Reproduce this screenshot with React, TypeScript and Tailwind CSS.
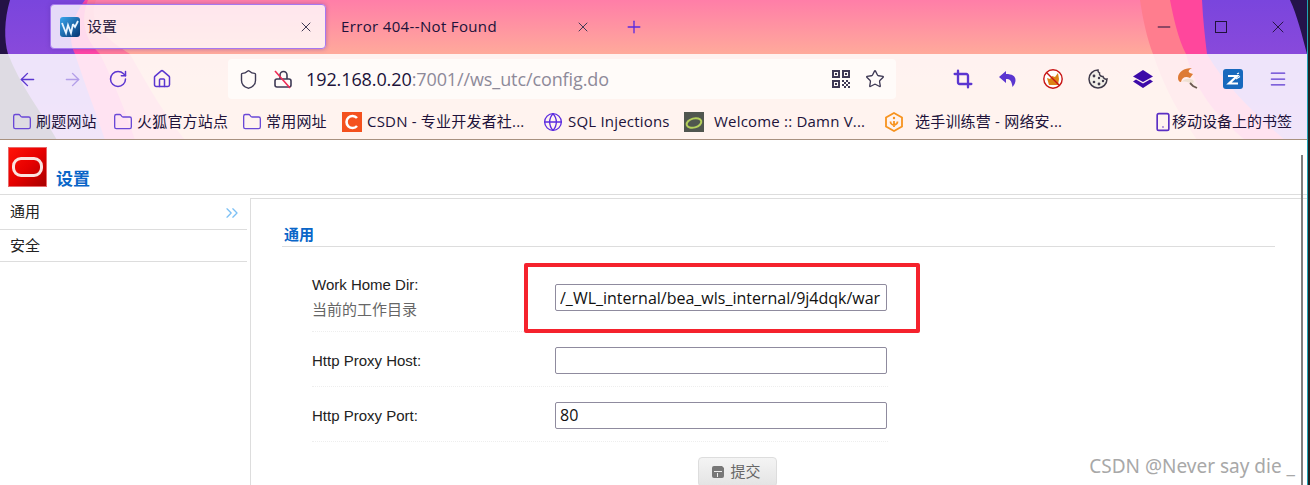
import React from "react";
import { ArrowLeft, ArrowRight, RotateCw, Home, Shield, Star, Folder, Globe, Smartphone, Menu, X, Plus, Minus, Crop, ChevronsRight } from "lucide-react";

const chromeFont = "font-['Open_Sans','Noto_Sans_CJK_SC',sans-serif]";
const pageFont = "font-['Liberation_Sans','Noto_Sans_CJK_SC',sans-serif]";

function Wallpaper() {
  return (
    <svg className="absolute left-0 top-0 h-[140px] w-[1307px]" viewBox="0 0 1307 140" preserveAspectRatio="none">
      <defs>
        <linearGradient id="sky" x1="0" y1="0" x2="0" y2="1">
          <stop offset="0" stopColor="#ff7ea8" />
          <stop offset="0.38" stopColor="#ffa99b" />
          <stop offset="1" stopColor="#ffb08f" />
        </linearGradient>
        <linearGradient id="band" x1="0" y1="0" x2="0" y2="1">
          <stop offset="0" stopColor="#7a45dd" />
          <stop offset="1" stopColor="#a050d8" />
        </linearGradient>
      </defs>
      <rect width="1307" height="140" fill="url(#sky)" />
      <path d="M0 0H96C88 20 100 35 130 54C150 90 165 115 185 140H0Z" fill="#ff7a9a" />
      <path d="M0 0H88C80 20 85 40 100 54C115 85 125 110 135 140H0Z" fill="#ff45a5" />
      <path d="M0 0H85C70 20 68 40 75 54C85 85 95 110 105 140H0Z" fill="url(#band)" />
      <path d="M0 0H10C4 20 4 40 8 54C20 85 40 110 57 140H0Z" fill="#241245" />
      <path d="M1140 0C1143 20 1147 38 1153 54C1165 90 1180 115 1197 140H1307V0Z" fill="#ff7d8e" />
      <path d="M1170 0C1174 20 1178 38 1186 54C1195 90 1215 115 1245 140H1307V0Z" fill="#ff479c" />
      <path d="M1202 0C1203 20 1205 38 1207 54C1225 85 1255 115 1285 140H1307V0Z" fill="url(#band)" />
      <path d="M1290 0C1297 15 1302 35 1307 54V0Z" fill="#24134a" />
      <rect y="54" width="1307" height="85" fill="#fff" fillOpacity="0.85" />
      <rect y="139" width="1307" height="1" fill="#a8917f" />
    </svg>
  );
}

function QrIcon() {
  return (
    <svg width="18" height="18" viewBox="0 0 18 18" fill="#3f3a55">
      <path d="M0 0h8v8H0zM2 2v4h4V2zM10 0h8v8h-8zM12 2v4h4V2zM0 10h8v8H0zM2 12v4h4v-4z" fillRule="evenodd" />
      <path d="M3 3h2v2H3zM13 3h2v2h-2zM3 13h2v2H3zM10 10h2v2h-2zM14 10h2v2h-2zM12 12h2v2h-2zM16 12h2v2h-2zM10 14h2v2h-2zM14 14h2v2h-2zM12 16h2v2h-2zM16 16h2v2h-2z" />
    </svg>
  );
}

function LockOffIcon() {
  return (
    <svg width="20" height="20" viewBox="0 0 20 20" fill="none">
      <path d="M7 10V6a3.500 3.500 0 0 1 7 0v4" stroke="#3f3a55" strokeWidth="1.600" />
      <rect x="2" y="10" width="16" height="8" rx="2" stroke="#3f3a55" strokeWidth="1.600" />
      <path d="M2 2l15 17" stroke="#f02a55" strokeWidth="1.600" />
    </svg>
  );
}

function FaviconW() {
  return (
    <svg width="20" height="20" viewBox="0 0 20 20">
      <defs>
        <linearGradient id="fav" x1="0" y1="0" x2="1" y2="1">
          <stop offset="0" stopColor="#39a6ee" />
          <stop offset="1" stopColor="#05336f" />
        </linearGradient>
      </defs>
      <rect width="20" height="20" rx="3" fill="url(#fav)" />
      <path d="M2 6l4 10 2-8 3 8 2-9M13 7l2 3 3-6" fill="none" stroke="#e8f4ff" strokeWidth="1.800" />
    </svg>
  );
}

function UndoIcon() {
  return (
    <svg width="20" height="20" viewBox="0 0 20 20" fill="#5b36d0">
      <path d="M8 2L1 8l7 6v-4c4 0 5.500 1.500 6.500 8 2.500-3 3-5 3-7 0-4-3.500-6-9.500-6z" />
    </svg>
  );
}

function NoAdsIcon() {
  return (
    <svg width="20" height="20" viewBox="0 0 20 20">
      <circle cx="10" cy="10" r="9.200" fill="#fff" stroke="#c81414" strokeWidth="1.400" />
      <path d="M4 9l3 1 2-3 3 1 3-4 1 6-1 6H6z" fill="#dc8316" />
      <path d="M3.500 3.500l13 13" stroke="#c81414" strokeWidth="1.400" />
    </svg>
  );
}

function CookieIcon() {
  return (
    <svg width="20" height="20" viewBox="0 0 20 20" fill="#3f3a4a">
      <path d="M10 1a9 9 0 1 0 9 9c-2 .5-3.500-.5-4-2.500-2 .3-4-1.500-3.500-3.500C10.300 3.500 9.800 2.500 10 1z" fill="#f2efe8" stroke="#3f3a4a" strokeWidth="1.500" />
      <circle cx="6" cy="7" r="1.400" />
      <circle cx="11" cy="9" r="1.200" />
      <circle cx="6" cy="13" r="1.300" />
      <circle cx="11" cy="15" r="1.400" />
      <circle cx="15" cy="12" r="1.200" />
    </svg>
  );
}

function LayersIcon() {
  return (
    <svg width="20" height="20" viewBox="0 0 20 20" fill="#3c0aa8">
      <path d="M10 1l10 6.500L10 13 0 7.500z" />
      <path d="M3 10.500l7 4 7-4 3 2L10 19 0 12.500z" />
    </svg>
  );
}

function BrushIcon() {
  return (
    <svg width="20" height="20" viewBox="0 0 20 20" className="overflow-visible">
      <path d="M0 9C0 3 6-1 14-1c-4 2-4 4-2 5l3 1-3 4C8 7 4 8 3 13 1 13 0 11 0 9z" fill="#dd7a35" />
      <path d="M4 13c2-4 8-4 11-2l1 2-3 2c-2-2-6-3-9-2z" fill="#eee0d2" />
      <path d="M12 14l3 3 4 2" fill="none" stroke="#6b5a50" strokeWidth="1.800" />
    </svg>
  );
}

function ZIcon() {
  return (
    <svg width="20" height="20" viewBox="0 0 20 20">
      <rect width="20" height="20" rx="3" fill="#1769bd" />
      <path d="M5 7h9L6 14.500h9" fill="none" stroke="#fff" strokeWidth="2.200" />
      <path d="M13 10l4-2.500M14 5l2-1" stroke="#fff" strokeWidth="1.200" />
    </svg>
  );
}

function CsdnIcon() {
  return (
    <svg width="20" height="20" viewBox="0 0 20 20">
      <rect width="20" height="20" fill="#f4511e" />
      <path d="M15 6a6 6 0 1 0 0 8" fill="none" stroke="#fff" strokeWidth="2.600" />
    </svg>
  );
}

function DvwaIcon() {
  return (
    <svg width="20" height="20" viewBox="0 0 20 20">
      <rect width="20" height="20" fill="#50564f" />
      <ellipse cx="10" cy="11" rx="7.500" ry="4.500" transform="rotate(-15 10 11)" fill="none" stroke="#b4cf5c" strokeWidth="2" />
    </svg>
  );
}

function TrainingIcon() {
  return (
    <svg width="18" height="20" viewBox="0 0 18 20" fill="none">
      <path d="M9 1l8 4.500v9L9 19l-8-4.500v-9z" stroke="#f7931e" strokeWidth="1.800" />
      <path d="M9 9v6M5.500 9.500a3.500 3.500 0 0 0 7 0" stroke="#f7931e" strokeWidth="1.800" />
      <circle cx="9" cy="6" r="1.200" fill="#f7931e" />
    </svg>
  );
}

function FolderMark() {
  return <Folder size={20} strokeWidth={1.6} className="text-[#6a48d7]" />;
}

const bookmarks = [
  { icon: <FolderMark />, label: "刷题网站", cls: "ml-[12px] w-[101px] gap-[4px]" },
  { icon: <FolderMark />, label: "火狐官方站点", cls: "w-[129px] gap-[4px]" },
  { icon: <FolderMark />, label: "常用网址", cls: "w-[100px] gap-[4px]" },
  { icon: <CsdnIcon />, label: "CSDN - 专业开发者社...", cls: "w-[201px] gap-[5px]" },
  { icon: <Globe size={20} strokeWidth={1.6} className="text-[#5b2be0]" />, label: "SQL Injections", cls: "w-[141px] gap-[5px]" },
  { icon: <DvwaIcon />, label: "Welcome :: Damn V...", cls: "w-[201px] gap-[10px]" },
  { icon: <TrainingIcon />, label: "选手训练营 - 网络安...", cls: "w-[268px] gap-[12px]" },
];

function TabStrip() {
  return (
    <div className="relative flex h-[54px] items-start pl-[50px] pt-[4px]">
      <div className="flex h-[45px] w-[276px] items-center rounded-[4px] border border-[#a678f0] bg-white/80 pl-[9px] pr-[11px] shadow-[0_0_4px_rgba(90,50,170,0.45)]">
        <FaviconW />
        <span className="ml-[7px] flex-1 text-[15px] text-[#2b2140]">设置</span>
        <X size={16} strokeWidth={1.5} className="text-[#3f3a55]" />
      </div>
      <div className="flex h-[45px] w-[270px] items-center pl-[15px] pr-[5px]">
        <span className="flex-1 text-[15px] tracking-[0.35px] text-[#20123a]">Error 404--Not Found</span>
        <X size={16} strokeWidth={1.5} className="text-[#3f3a55]" />
      </div>
      <div className="ml-[28px] flex h-[45px] items-center">
        <Plus size={20} strokeWidth={1.6} className="text-[#5a2be0]" />
      </div>
      <div className="ml-auto mr-[19px] flex h-[45px] items-center gap-[37px] text-[#20123a]">
        <Minus size={20} strokeWidth={1.2} />
        <div className="mx-[4px] h-[12px] w-[12px] border border-[#20123a]" />
        <X size={20} strokeWidth={1.1} />
      </div>
    </div>
  );
}

function Toolbar() {
  return (
    <div className="relative flex h-[50px] items-center pl-[17px] text-[#5b36d0]">
      <div className="flex w-[211px] items-center gap-[25px]">
        <ArrowLeft size={21} strokeWidth={1.6} />
        <ArrowRight size={21} strokeWidth={1.6} className="-ml-[1px] opacity-40" />
        <RotateCw size={20} strokeWidth={1.8} />
        <Home size={20} strokeWidth={1.8} className="-ml-[1px]" />
      </div>
      <div className="flex h-[40px] w-[668px] items-center rounded-[4px] bg-[#fffbf9] pl-[10px] pr-[11px]">
        <Shield size={21} strokeWidth={1.6} className="text-[#3f3a55]" />
        <span className="ml-[14px]"><LockOffIcon /></span>
        <span className="ml-[13px] flex-1 text-[18px] leading-none tracking-[-0.1px] text-[#20123a]">
          192.168.0.20<span className="text-[#8e8a99]">:7001//ws_utc/config.do</span>
        </span>
        <QrIcon />
        <Star size={20} strokeWidth={1.6} className="ml-[15px] text-[#3f3a55]" />
      </div>
      <div className="ml-[57px] flex items-center gap-[25px]">
        <Crop size={20} strokeWidth={2.8} />
        <UndoIcon />
        <NoAdsIcon />
        <CookieIcon />
        <LayersIcon />
        <BrushIcon />
        <ZIcon />
        <Menu size={20} strokeWidth={1.5} />
      </div>
    </div>
  );
}

function BookmarksBar() {
  return (
    <div className="relative flex h-[35px] items-center text-[15px] tracking-[0.2px] text-[#20123a]">
      {bookmarks.map((b) => (
        <div key={b.label} className={`flex shrink-0 items-center whitespace-nowrap ${b.cls}`}>
          {b.icon}
          <span>{b.label}</span>
        </div>
      ))}
      <div className="ml-auto mr-[15px] flex items-center tracking-normal">
        <Smartphone size={20} strokeWidth={2} className="text-[#5b2fc4]" />
        <span className="-ml-[1px]">移动设备上的书签</span>
      </div>
    </div>
  );
}

function OracleLogo() {
  return (
    <div className="flex h-[40px] w-[39px] items-center justify-center border border-[#e8686a] bg-gradient-to-br from-[#ff1208] via-[#e60000] to-[#a80000]">
      <div className="h-[20px] w-[31px] rounded-[9px] border-[3px] border-[#fbe3e0]" />
    </div>
  );
}

const fields = [
  { label: "Work Home Dir:", hint: "当前的工作目录", value: "/_WL_internal/bea_wls_internal/9j4dqk/war", cls: "h-[66px] pb-[2px]" },
  { label: "Http Proxy Host:", hint: "", value: "", cls: "h-[55px] pt-[2px]" },
  { label: "Http Proxy Port:", hint: "", value: "80", cls: "h-[55px] pt-[2px]" },
];

function FieldRow({ field }: { field: (typeof fields)[number] }) {
  return (
    <div className={`flex items-center border-b border-dotted border-[#eee] ${field.cls}`}>
      <div className={`w-[243px] text-[15px] leading-[25px] text-[#222] ${field.hint ? "-mt-[2px]" : "mt-[1px]"}`}>
        <div>{field.label}</div>
        {field.hint && <div className="text-[#666]">{field.hint}</div>}
      </div>
      <input
        readOnly
        value={field.value}
        className={`${chromeFont} h-[27px] w-[332px] rounded-[2px] border border-[#8f8b9e] bg-white px-[4px] text-[16px] text-[#111] outline-none`}
      />
    </div>
  );
}

export default function App() {
  return (
    <div className="relative h-[485px] w-[1310px] overflow-hidden bg-white">
      {/* browser chrome */}
      <div className={`relative h-[140px] w-[1307px] ${chromeFont}`}>
        <Wallpaper />
        <TabStrip />
        <Toolbar />
        <BookmarksBar />
      </div>

      {/* window edge */}
      <div className="absolute bottom-0 right-0 top-0 w-[3px] border-l border-[#1fa3b5] bg-[#222]" />
      <div className="absolute bottom-0 right-[7px] top-[155px] w-[2px] bg-[#808080]" />

      {/* page */}
      <div className={`w-[1307px] ${pageFont}`}>
        <div className="flex h-[55px] items-start border-b border-[#ddd] pl-[8px] pt-[7px]">
          <OracleLogo />
          <h1 className="ml-[9px] mt-[22px] text-[17px] font-bold leading-[22px] text-[#0a66c8]">设置</h1>
        </div>
        <div className="flex">
          <div className="w-[247px] text-[15px] text-[#222]">
            <div className="flex h-[35px] items-center justify-between border-b border-[#ddd] pl-[10px] pr-[5px] pt-[1px]">
              <span>通用</span>
              <ChevronsRight size={20} strokeWidth={1.6} className="text-[#7cc0f5]" />
            </div>
            <div className="flex h-[32px] items-center border-b border-[#ddd] pl-[10px] pt-[1px]">安全</div>
          </div>
          <div className="ml-[3px] mt-[3px] h-[300px] flex-1 border-l border-t border-[#ddd] pl-[31px] pr-[32px]">
            <div className="flex h-[48px] items-end border-b border-[#ddd] pl-[2px] text-[15px] font-bold text-[#0a66c8]">通用</div>
            <div className="relative mt-[19px] w-[606px] pl-[30px]">
              {fields.map((f) => (
                <FieldRow key={f.label} field={f} />
              ))}
              {/* annotation drawn over the screenshot */}
              <div className="absolute left-[242px] top-[-3px] h-[70px] w-[396px] rounded-[2px] border-[4px] border-[#f5222d]" />
              <div className="mt-[15px] pl-[386px]">
                <button className="flex h-[30px] w-[79px] items-center justify-center gap-[6px] rounded-[4px] border border-[#ddd] bg-gradient-to-b from-[#f4f4f4] to-[#e4e4e4] pr-[2px] text-[15px] text-[#666]">
                  <svg width="12" height="12" viewBox="0 0 12 12" fill="#777">
                    <path d="M2 0h8l2 2v8a2 2 0 0 1-2 2H2a2 2 0 0 1-2-2V2a2 2 0 0 1 2-2z" />
                    <path d="M2 5h8v1H2zM5 7h1v4H5z" fill="#eee" />
                  </svg>
                  提交
                </button>
              </div>
            </div>
          </div>
        </div>
      </div>

      {/* watermark */}
      <div className="absolute bottom-[8px] right-[15px] text-[19px] leading-[22px] text-[#a8a8a8]">CSDN @Never say die _</div>
    </div>
  );
}
